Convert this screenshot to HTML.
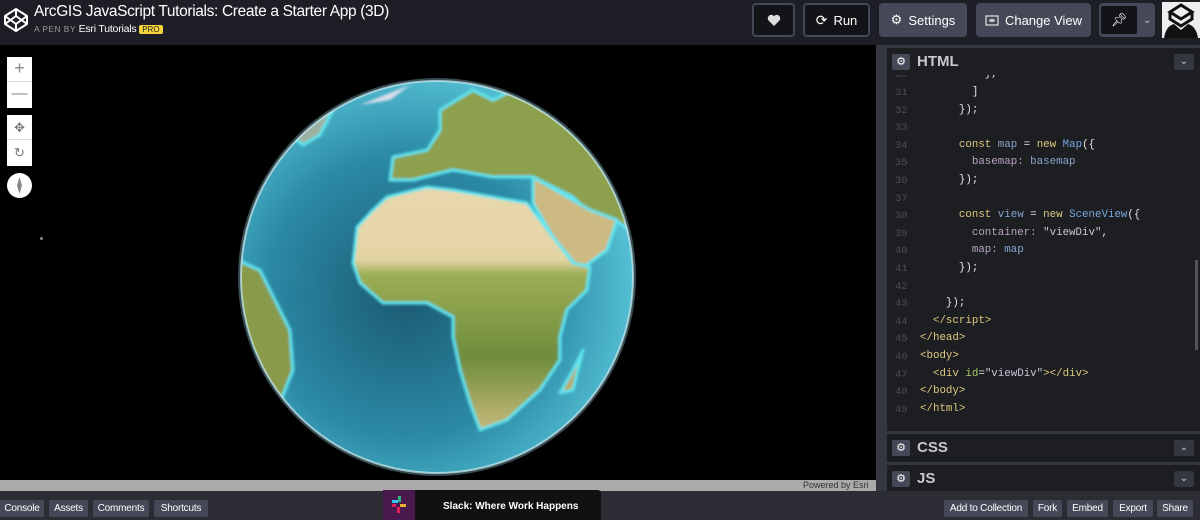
<!DOCTYPE html>
<html><head><meta charset="utf-8"><style>
*{margin:0;padding:0;box-sizing:border-box}
html,body{width:1200px;height:520px;overflow:hidden}
body{background:#1e1f26;font-family:"Liberation Sans",sans-serif;position:relative;color:#fff}
.abs{position:absolute}
.btn{position:absolute;top:3px;height:34px;border-radius:4px;font-size:13px;color:#fff;display:flex;align-items:center;justify-content:center;gap:6px}
.dark{background:#131417;border:2px solid #444857}
.light{background:#444857}
.code{position:absolute;left:887px;top:75px;width:313px;height:357px;background:#1d1e22;overflow:hidden;font-family:"Liberation Mono",monospace;font-size:10.8px}
.ln{position:absolute;left:8px;width:20px;color:#4b4d55;font-size:10.5px}
.cl{position:absolute;left:33px;white-space:pre;color:#e4e4e4}
.k{color:#ddca7e}.v{color:#88a4cc}.c{color:#79a8e0}.p{color:#b8a3c0}.s{color:#c6c6d6}.t{color:#ddca7e}.a{color:#a8c86a}
.hdr{position:absolute;left:887px;width:313px;background:#1d1e22;border-top:3px solid #343640}
.gear{position:absolute;left:5px;width:18px;height:16px;background:#444857;border-radius:2px;font-size:11px;text-align:center;line-height:16px;color:#fff}
.ht{position:absolute;left:30px;font-size:15px;font-weight:bold;color:#c8c9d0}
.chev{position:absolute;right:6px;width:20px;height:16px;background:#343640;border-radius:2px;color:#ccc;font-size:10px;text-align:center;line-height:16px}
.bb{position:absolute;top:500px;height:17px;background:#444857;border-radius:2px;font-size:10px;color:#fff;line-height:17px;text-align:center;letter-spacing:-.2px}
</style></head><body>
<!-- header -->
<svg class="abs" style="left:3px;top:7px" width="26" height="26" viewBox="0 0 26 26" fill="none" stroke="#fff" stroke-width="2" stroke-linejoin="round"><path d="M13 2L24 9V17L13 24L2 17V9Z"/><path d="M13 2V9M13 17V24M2 9L13 17L24 9M2 17L13 9L24 17"/></svg>
<div class="abs" style="left:34px;top:3px;font-size:15.5px;letter-spacing:-.35px;color:#fff">ArcGIS JavaScript Tutorials: Create a Starter App (3D)</div>
<div class="abs" style="left:34px;top:23px;font-size:8.5px;color:#999;letter-spacing:.4px">A PEN BY <span style="color:#fff;font-size:10.5px;letter-spacing:-.2px">Esri Tutorials</span> <span style="background:#f4d43c;color:#222;font-size:8px;padding:0 3px;border-radius:2px;letter-spacing:0">PRO</span></div>
<div class="btn dark" style="left:752px;width:43px"><svg width="14" height="13" viewBox="0 0 14 13"><path d="M7 12L1.5 6.5A3.2 3.2 0 0 1 7 2.2A3.2 3.2 0 0 1 12.5 6.5Z" fill="#ddd"/></svg></div>
<div class="btn dark" style="left:803px;width:67px"><span style="font-size:14px">⟳</span>Run</div>
<div class="btn light" style="left:879px;width:88px"><span>⚙</span>Settings</div>
<div class="btn light" style="left:976px;width:115px"><svg width="14" height="11"><rect x="1" y="1" width="12" height="9" fill="none" stroke="#ccc" stroke-width="1.4"/><ellipse cx="7" cy="5.5" rx="3" ry="1.6" fill="#ccc"/></svg>Change View</div>
<div class="btn light" style="left:1099px;width:56px;justify-content:flex-start;padding-left:2px"><div style="width:36px;height:28px;background:#131417;border-radius:2px;display:flex;align-items:center;justify-content:center;font-size:13px">📌︎</div><span style="font-size:10px;color:#ccc">⌄</span></div>
<div class="abs" style="left:1162px;top:2px;width:38px;height:36px;background:#eee"><svg width="38" height="36"><path d="M2 36Q4 24 12 22L19 28L26 22Q34 24 36 36Z" fill="#111"/><path d="M19 3L30 10L19 17L8 10Z" fill="none" stroke="#111" stroke-width="3"/><path d="M8 10V17L19 24L30 17V10" fill="none" stroke="#111" stroke-width="3"/></svg></div>
<!-- preview -->
<div class="abs" style="left:0;top:45px;width:876px;height:446px;background:#000"></div>
<div class="abs" style="left:0;top:480px;width:876px;height:11px;background:#aaa"></div>
<div class="abs" style="left:803px;top:480px;font-size:9px;color:#333">Powered by Esri</div>
<div class="abs" style="left:40px;top:237px;width:3px;height:3px;background:#888;border-radius:50%"></div>
<div class="abs" style="left:7px;top:57px;width:25px;height:51px;background:#fff"><div style="height:25px;border-bottom:1px solid #ddd;text-align:center;color:#888;font-size:18px;line-height:23px">+</div><div style="text-align:center;color:#888;font-size:16px;line-height:24px">—</div></div>
<div class="abs" style="left:7px;top:115px;width:25px;height:51px;background:#fff"><div style="height:25px;border-bottom:1px solid #ddd;text-align:center;color:#777;font-size:13px;line-height:25px">✥</div><div style="text-align:center;color:#777;font-size:13px;line-height:25px">↻</div></div>
<div class="abs" style="left:7px;top:173px;width:25px;height:25px;background:#fff;border-radius:50%"><svg width="25" height="25"><path d="M12.5 4L15 12.5L12.5 21L10 12.5Z" fill="#888"/></svg></div>
<svg class="abs" style="left:230px;top:70px" width="420" height="420" viewBox="230 70 420 420">
<defs>
<radialGradient id="oc" cx="0.42" cy="0.55" r="0.6"><stop offset="0" stop-color="#1b5a72"/><stop offset="0.6" stop-color="#2b8aa6"/><stop offset="1" stop-color="#57c3d6"/></radialGradient>
<linearGradient id="af" x1="0" y1="0" x2="0" y2="1"><stop offset="0" stop-color="#e8d8ae"/><stop offset="0.3" stop-color="#e4d4a4"/><stop offset="0.36" stop-color="#9cae55"/><stop offset="0.7" stop-color="#6f8c3c"/><stop offset="1" stop-color="#c6b97a"/></linearGradient>
<clipPath id="cp"><circle cx="437" cy="277" r="196"/></clipPath>
<filter id="bl"><feGaussianBlur stdDeviation="1.2"/></filter>
</defs>
<circle cx="437" cy="277" r="199" fill="#9adbe8" opacity=".35"/>
<circle cx="437" cy="277" r="196" fill="url(#oc)"/>
<g clip-path="url(#cp)" filter="url(#bl)" stroke="#5fe6f0" stroke-width="3" stroke-linejoin="round">
<path d="M390 180L393 157L427 150L440 130L440 110L473 90L493 100L513 90L557 110L607 153L640 203L640 240L620 223L593 217L573 197L533 177L493 177L453 170L413 180Z" fill="#8da04e"/>
<path d="M533 177L590 210L617 220L607 250L580 270L553 237L533 203Z" fill="#cdb982"/>
<path d="M387 197L427 187L453 190L493 197L527 203L553 237L573 263L590 267L587 290L567 310L560 337L560 360L540 390L507 420L480 430L470 403L460 370L453 337L453 317L427 303L383 303L360 283L353 263L357 227L373 210Z" fill="url(#af)"/>
<path d="M573 370L583 350L573 390L560 393Z" fill="#b8a86c"/>
<path d="M230 257L260 270L290 330L293 370L280 403L230 410Z" fill="#8a9a4c"/>
<path d="M290 135L333 110L320 135L303 145Z" fill="#9bb0a0"/>
<path d="M360 105L410 85L390 100Z" fill="#dde" stroke="none"/>
</g>
<circle cx="437" cy="277" r="196" fill="none" stroke="#cfeff5" stroke-width="2" opacity=".7"/>
</svg>
<!-- divider -->
<div class="abs" style="left:876px;top:45px;width:11px;height:446px;background:#343640"></div>
<!-- HTML header -->
<div class="hdr" style="top:45px;height:30px"><div class="gear" style="top:6px">⚙</div><div class="ht" style="top:5px">HTML</div><div class="chev" style="top:6px">⌄</div></div>
<div class="code">
<div class="abs" style="right:2px;top:185px;width:3px;height:90px;background:#555"></div>
<div class="ln" style="top:-6px">30</div><div class="cl" style="top:-7px">          },</div>
<div class="ln" style="top:12px">31</div><div class="cl" style="top:11px">        ]</div>
<div class="ln" style="top:30px">32</div><div class="cl" style="top:29px">      });</div>
<div class="ln" style="top:47px">33</div>
<div class="ln" style="top:65px">34</div><div class="cl" style="top:64px">      <span class="k">const</span> <span class="v">map</span> = <span class="k">new</span> <span class="c">Map</span>({</div>
<div class="ln" style="top:82px">35</div><div class="cl" style="top:81px">        <span class="p">basemap:</span> <span class="v">basemap</span></div>
<div class="ln" style="top:100px">36</div><div class="cl" style="top:99px">      });</div>
<div class="ln" style="top:118px">37</div>
<div class="ln" style="top:135px">38</div><div class="cl" style="top:134px">      <span class="k">const</span> <span class="v">view</span> = <span class="k">new</span> <span class="c">SceneView</span>({</div>
<div class="ln" style="top:153px">39</div><div class="cl" style="top:152px">        <span class="p">container:</span> <span class="s">"viewDiv"</span>,</div>
<div class="ln" style="top:170px">40</div><div class="cl" style="top:169px">        <span class="p">map:</span> <span class="v">map</span></div>
<div class="ln" style="top:188px">41</div><div class="cl" style="top:187px">      });</div>
<div class="ln" style="top:206px">42</div>
<div class="ln" style="top:223px">43</div><div class="cl" style="top:222px">    });</div>
<div class="ln" style="top:241px">44</div><div class="cl" style="top:240px">  <span class="t">&lt;/script&gt;</span></div>
<div class="ln" style="top:258px">45</div><div class="cl" style="top:257px"><span class="t">&lt;/head&gt;</span></div>
<div class="ln" style="top:276px">46</div><div class="cl" style="top:275px"><span class="t">&lt;body&gt;</span></div>
<div class="ln" style="top:294px">47</div><div class="cl" style="top:293px">  <span class="t">&lt;div</span> <span class="a">id</span>=<span class="s">"viewDiv"</span><span class="t">&gt;&lt;/div&gt;</span></div>
<div class="ln" style="top:311px">48</div><div class="cl" style="top:310px"><span class="t">&lt;/body&gt;</span></div>
<div class="ln" style="top:329px">49</div><div class="cl" style="top:328px"><span class="t">&lt;/html&gt;</span></div>
</div>
<div class="hdr" style="top:431px;height:31px"><div class="gear" style="top:6px">⚙</div><div class="ht" style="top:5px">CSS</div><div class="chev" style="top:6px">⌄</div></div>
<div class="hdr" style="top:462px;height:29px"><div class="gear" style="top:6px">⚙</div><div class="ht" style="top:5px">JS</div><div class="chev" style="top:6px">⌄</div></div>
<!-- bottom bar -->
<div class="abs" style="left:0;top:491px;width:1200px;height:29px;background:#2c2d34"></div>
<div class="bb" style="left:0;width:44px">Console</div>
<div class="bb" style="left:49px;width:39px">Assets</div>
<div class="bb" style="left:93px;width:56px">Comments</div>
<div class="bb" style="left:154px;width:54px">Shortcuts</div>
<div class="abs" style="left:383px;top:490px;width:218px;height:30px;background:#111;border-radius:3px 3px 0 0"></div>
<div class="abs" style="left:383px;top:490px;width:32px;height:30px;background:#4a1a4e"><svg width="32" height="30"><rect x="9" y="10" width="6" height="3" fill="#36c5f0"/><rect x="15" y="6" width="3" height="6" fill="#2eb67d"/><rect x="17" y="14" width="6" height="3" fill="#ecb22e"/><rect x="14" y="17" width="3" height="6" fill="#e01e5a"/><rect x="9" y="14" width="4" height="3" fill="#e01e5a"/></svg></div>
<div class="abs" style="left:443px;top:501px;font-size:10px;font-weight:bold;color:#fff">Slack: Where Work Happens</div>
<div class="bb" style="left:944px;width:84px">Add to Collection</div>
<div class="bb" style="left:1033px;width:29px">Fork</div>
<div class="bb" style="left:1067px;width:41px">Embed</div>
<div class="bb" style="left:1113px;width:40px">Export</div>
<div class="bb" style="left:1157px;width:36px">Share</div>
</body></html>
